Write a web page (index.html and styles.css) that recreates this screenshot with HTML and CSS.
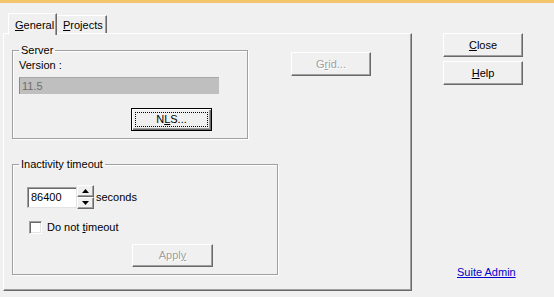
FILE: index.html
```html
<!DOCTYPE html>
<html lang="en">

<head>
    <meta charset="utf-8">
    <title>Settings</title>
    <link rel="stylesheet" href="styles.css">
</head>

<body>
    <div class="titlebar"></div>
    <div class="dialog">
        <div class="tabs-area">
            <div class="tabstrip">
                <div class="tab active"><u>G</u>eneral</div>
                <div class="tab"><u>P</u>rojects</div>
            </div>
            <div class="panel">
                <div class="top-row">
                    <fieldset class="group server">
                        <legend>Server</legend>
                        <div class="label">Version :</div>
                        <div class="readonly">11.5</div>
                        <button class="btn focus nls">N<u>L</u>S...</button>
                    </fieldset>
                    <button class="btn disabled grid">G<u>r</u>id...</button>
                </div>
                <fieldset class="group timeout">
                    <legend>Inactivity timeout</legend>
                    <div class="spin-row">
                        <div class="numbox">86400</div>
                        <div class="spin">
                            <span class="spin-btn">
                                <svg width="7" height="4" viewBox="0 0 7 4"><path d="M3.5 0 L7 4 L0 4 Z" fill="#000"/></svg>
                            </span>
                            <span class="spin-btn">
                                <svg width="7" height="4" viewBox="0 0 7 4"><path d="M0 0 L7 0 L3.5 4 Z" fill="#000"/></svg>
                            </span>
                        </div>
                        <span class="unit">seconds</span>
                    </div>
                    <label class="check"><span class="box"></span><span>Do not <u>t</u>imeout</span></label>
                    <button class="btn disabled apply">Appl<u>y</u></button>
                </fieldset>
            </div>
        </div>
        <div class="side">
            <button class="btn side-btn"><u>C</u>lose</button>
            <button class="btn side-btn"><u>H</u>elp</button>
            <a class="link" href="#">Suite Admin</a>
        </div>
    </div>
</body>

</html>
```

FILE: styles.css
```css
* {
    box-sizing: border-box;
}

body {
    margin: 0;
    background: #f0f0f0;
    font-family: "Liberation Sans", Arial, sans-serif;
    font-size: 11px;
    line-height: 13px;
    color: #000;
    height: 297px;
    overflow: hidden;
}

.titlebar {
    height: 3px;
    background: #f3c66e;
}

.dialog {
    display: flex;
    padding-left: 3px;
}

.tabs-area {
    width: 409px;
}

.tabstrip {
    height: 30px;
    display: flex;
    align-items: flex-end;
    padding-left: 5px;
}

.tab {
    height: 18px;
    padding: 3px 0 0 6px;
    width: 50px;
    border-top: 1px solid #fff;
    border-right: 1px solid #696969;
    box-shadow: inset -1px 0 #a0a0a0;
}

.tab.active {
    position: relative;
    z-index: 1;
    height: 22px;
    width: 49px;
    margin-bottom: -2px;
    padding-top: 5px;
    border-left: 1px solid #fff;
    background: #f0f0f0;
}

.panel {
    height: 258px;
    border: 1px solid;
    border-color: #fff #696969 #696969 #fff;
    box-shadow: inset -1px -1px #a0a0a0;
    padding: 10px 0 0 8px;
}

.top-row {
    display: flex;
    align-items: flex-start;
}

.group {
    margin: 0;
    padding: 0 0 6px 6px;
    border: 1px solid #a0a0a0;
    box-shadow: 1px 1px 0 #fff, inset 1px 1px 0 #fff;
    display: flex;
    flex-direction: column;
    align-items: flex-start;
}

.group legend {
    padding: 0 2px;
    margin-left: 0;
}

.server {
    width: 236px;
    padding-bottom: 7px;
}

.label {
    margin-top: 2px;
}

.readonly {
    margin-top: 5px;
    width: 200px;
    height: 17px;
    padding: 2px 0 0 2px;
    background: #bfbfbf;
    color: #6d6d6d;
    border-left: 1px solid #8a8a8a;
    border-top: 1px solid #a8a8a8;
}

.btn {
    position: relative;
    width: 81px;
    height: 23px;
    padding: 0;
    font: inherit;
    color: #000;
    background: #f0f0f0;
    border: 1px solid;
    border-color: #fff #696969 #696969 #fff;
    box-shadow: inset -1px -1px #a0a0a0;
}

.btn.focus {
    border: 1px solid #000;
    box-shadow: inset 1px 1px #fff, inset -1px -1px #696969, inset -2px -2px #a0a0a0;
}

.btn.focus::after {
    content: "";
    position: absolute;
    top: 3px;
    left: 3px;
    right: 3px;
    bottom: 3px;
    border: 1px dotted #000;
}

.btn.disabled {
    color: #a0a0a0;
    text-shadow: 1px 1px #fff;
}

.nls {
    margin: 14px 0 0 112px;
}

.grid {
    width: 80px;
    height: 24px;
    margin: 8px 0 0 43px;
}

.timeout {
    width: 266px;
    margin-top: 19px;
    padding-bottom: 7px;
}

.spin-row {
    display: flex;
    align-items: center;
    margin: 14px 0 0 8px;
}

.numbox {
    width: 50px;
    height: 21px;
    padding: 3px 0 0 3px;
    background: #fff;
    border: 1px solid;
    border-color: #a0a0a0 #e3e3e3 #e3e3e3 #a0a0a0;
    box-shadow: inset 1px 1px #696969;
}

.spin {
    display: flex;
    flex-direction: column;
    width: 17px;
}

.spin-btn {
    height: 12px;
    display: flex;
    align-items: center;
    justify-content: center;
    background: #f0f0f0;
    border: 1px solid;
    border-color: #fff #696969 #696969 #fff;
    box-shadow: inset -1px -1px #a0a0a0;
}

.unit {
    margin-left: 2px;
}

.check {
    display: flex;
    align-items: center;
    margin: 12px 0 0 10px;
}

.box {
    width: 13px;
    height: 13px;
    margin-right: 5px;
    background: #fff;
    border: 1px solid;
    border-color: #a0a0a0 #fff #fff #a0a0a0;
    box-shadow: inset 1px 1px #696969, inset -1px -1px #e3e3e3;
}

.apply {
    margin: 10px 0 0 113px;
}

.side {
    display: flex;
    flex-direction: column;
    align-items: flex-start;
    margin-left: 31px;
    padding-top: 30px;
    height: 288px;
}

.side-btn {
    width: 80px;
    height: 24px;
    margin-bottom: 4px;
}

.link {
    margin: auto 0 12px 14px;
    color: #0000cc;
}
```
